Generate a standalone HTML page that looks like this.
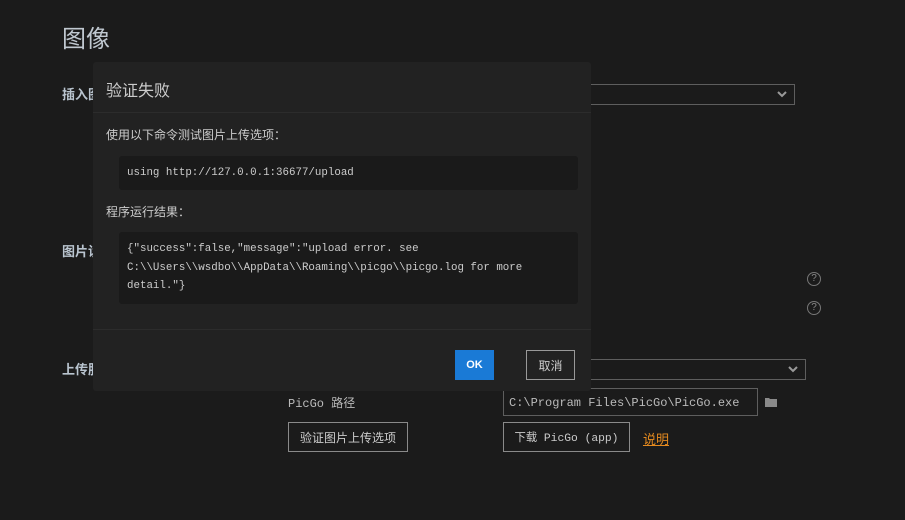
<!DOCTYPE html>
<html><head><meta charset="utf-8"><style>
*{margin:0;padding:0;box-sizing:border-box}
body{width:905px;height:520px;background:#1b1b1b;position:relative;overflow:hidden;font-family:"Liberation Sans","Noto Sans CJK SC",sans-serif;color:#ccc}
.a{position:absolute}
.mono{font-family:"Liberation Mono","Noto Sans CJK SC",monospace}
.lbl{font-size:13px;font-weight:bold;color:#b9c4cf}
.sel{border:1px solid #5e5e5e}
.chev{position:absolute;right:6px;top:4px;width:12px;height:10px}
.btn{border:1px solid #8a8a8a;font-size:12px;color:#ccc;display:flex;align-items:center;justify-content:center}
.q{width:14px;height:14px;border:1px solid #777;border-radius:50%;font-size:10px;color:#888;text-align:center;line-height:12px}
</style></head><body>
<div class="a" style="left:62px;top:19px;font-size:24px;color:#c0c8d0">图像</div>
<div class="a lbl" style="left:62px;top:84px">插入图</div>
<div class="a lbl" style="left:62px;top:241px">图片设</div>
<div class="a lbl" style="left:62px;top:359px">上传服</div>
<div class="a sel" style="left:560px;top:84px;width:235px;height:21px"><svg class="chev" viewBox="0 0 12 10"><path d="M2 3l4 4 4-4" stroke="#999" stroke-width="2" fill="none"/></svg></div>
<div class="a sel" style="left:560px;top:359px;width:246px;height:21px"><svg class="chev" viewBox="0 0 12 10"><path d="M2 3l4 4 4-4" stroke="#999" stroke-width="2" fill="none"/></svg></div>
<div class="a q" style="left:807px;top:272px">?</div>
<div class="a q" style="left:807px;top:301px">?</div>
<div class="a mono" style="left:288px;top:394px;font-size:12px;color:#bbb">PicGo 路径</div>
<div class="a sel mono" style="left:503px;top:388px;width:255px;height:28px;font-size:12px;color:#bbb;padding:7px 0 0 5px">C:\Program Files\PicGo\PicGo.exe</div>
<svg class="a" style="left:765px;top:397px" width="12" height="10" viewBox="0 0 12 10"><path d="M0 1h4l1 1h7v8H0z" fill="#8a8a8a"/></svg>
<div class="a btn" style="left:288px;top:422px;width:120px;height:30px">验证图片上传选项</div>
<div class="a btn mono" style="left:503px;top:422px;width:127px;height:30px;font-size:11.3px">下载 PicGo (app)</div>
<div class="a" style="left:643px;top:429px;font-size:13px;color:#e58a1f;text-decoration:underline">说明</div>

<div class="a" style="left:93px;top:62px;width:498px;height:329px;background:#222;border-radius:3px">
<div class="a" style="left:13px;top:15px;font-size:16px;color:#ccc">验证失败</div>
<div class="a" style="left:0;top:50px;width:498px;height:1px;background:#2c2c2c"></div>
<div class="a" style="left:13px;top:64px;font-size:12px;color:#ccc">使用以下命令测试图片上传选项：</div>
<div class="a mono" style="left:26px;top:94px;width:459px;height:34px;background:#1a1a1a;border-radius:3px;font-size:10.8px;color:#ccc;padding:11px 8px">using http://127.0.0.1:36677/upload</div>
<div class="a" style="left:13px;top:141px;font-size:12px;color:#ccc">程序运行结果：</div>
<div class="a mono" style="left:26px;top:170px;width:459px;height:72px;background:#1a1a1a;border-radius:3px;font-size:10.8px;line-height:18.5px;color:#ccc;padding:8px 8px;white-space:pre">{"success":false,"message":"upload error. see
C:\\Users\\wsdbo\\AppData\\Roaming\\picgo\\picgo.log for more
detail."}</div>
<div class="a" style="left:0;top:267px;width:498px;height:1px;background:#2c2c2c"></div>
<div class="a" style="left:362px;top:288px;width:39px;height:30px;background:#1a7ad6;color:#fff;font-size:11px;font-weight:bold;display:flex;align-items:center;justify-content:center">OK</div>
<div class="a btn" style="left:433px;top:288px;width:49px;height:30px;border-color:#999">取消</div>
</div>
</body></html>
